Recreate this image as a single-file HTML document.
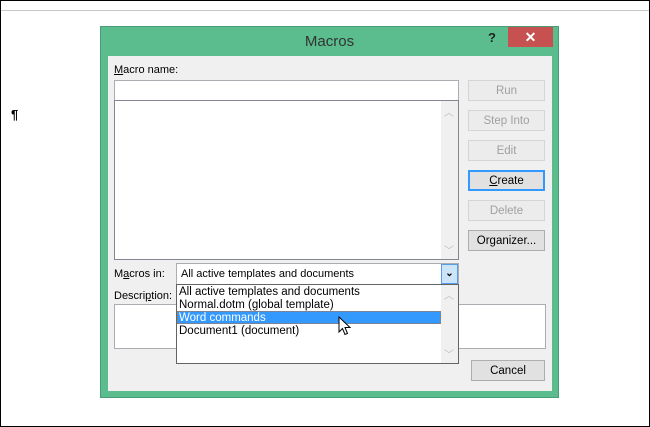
<!DOCTYPE html><html><head><style>
*{margin:0;padding:0;box-sizing:border-box}
body{width:650px;height:427px;background:#fff;position:relative;overflow:hidden;font-family:"Liberation Sans",sans-serif;font-size:11px;color:#000}
.a{position:absolute}
.btn{position:absolute;left:468px;width:77px;height:21px;border:1px solid #adadad;background:#e1e1e1;text-align:center;line-height:21px;font-size:11.5px}
.dis{border-color:#d5d5d5;background:#ececec;color:#a0a0a0}
u{text-decoration:underline}
</style></head><body>
<div class="a" style="left:0;top:0;width:650px;height:427px;border:1px solid #000"></div>
<div class="a" style="left:1px;top:10px;width:648px;height:1px;background:#c8c8c8"></div>
<div class="a" style="left:11px;top:107px;font-size:13px;font-weight:bold">¶</div>
<div class="a" style="left:100px;top:26px;width:459px;height:372px;background:#5bbd8e;border:1px solid #4a9c74"></div>
<div class="a" style="left:100px;top:33px;width:459px;text-align:center;font-size:15px;color:#333">Macros</div>
<div class="a" style="left:488px;top:30px;font-size:13px;font-weight:bold;color:#222">?</div>
<div class="a" style="left:508px;top:27px;width:45px;height:20px;background:#c75050;color:#fff;text-align:center;font-size:14px;line-height:20px;font-weight:bold">✕</div>
<div class="a" style="left:108px;top:56px;width:444px;height:335px;background:#f0f0f0"></div>
<div class="a" style="left:114px;top:64px"><u>M</u>acro name:</div>
<div class="a" style="left:114px;top:80px;width:345px;height:21px;background:#fff;border:1px solid #abadb3"></div>
<div class="a" style="left:114px;top:100px;width:345px;height:160px;background:#fff;border:1px solid #828790"></div>
<div class="a" style="left:441px;top:101px;width:17px;height:158px;background:#f0f0f0"></div>
<div class="a" style="left:444px;top:104px;color:#bbb;font-size:10px">︿</div>
<div class="a" style="left:444px;top:242px;color:#bbb;font-size:10px">﹀</div>
<div class="btn dis" style="top:80px">Run</div>
<div class="btn dis" style="top:110px">Step Into</div>
<div class="btn dis" style="top:140px">Edit</div>
<div class="btn" style="top:170px;border-color:#3399ff;box-shadow:inset 0 0 0 1px #3399ff"><u>C</u>reate</div>
<div class="btn dis" style="top:200px">Delete</div>
<div class="btn" style="top:230px">Or<u>g</u>anizer...</div>
<div class="btn" style="top:360px;left:471px;width:74px">Cancel</div>
<div class="a" style="left:114px;top:268px">M<u>a</u>cros in:</div>
<div class="a" style="left:176px;top:263px;width:283px;height:22px;background:#fff;border:1px solid #abadb3;padding:4px 4px">All active templates and documents</div>
<div class="a" style="left:441px;top:264px;width:17px;height:20px;background:#cce4f7;border:1px solid #569de5;text-align:center;font-size:10px;line-height:18px;font-weight:bold">⌄</div>
<div class="a" style="left:114px;top:290px">Descri<u>p</u>tion:</div>
<div class="a" style="left:114px;top:304px;width:432px;height:45px;background:#fff;border:1px solid #abadb3"></div>
<div class="a" style="left:176px;top:284px;width:283px;height:80px;background:#fff;border:1px solid #646464"></div>
<div class="a" style="left:441px;top:285px;width:17px;height:78px;background:#f0f0f0"></div>
<div class="a" style="left:444px;top:287px;color:#bbb;font-size:10px">︿</div>
<div class="a" style="left:444px;top:346px;color:#bbb;font-size:10px">﹀</div>
<div class="a" style="left:177px;top:311px;width:264px;height:13px;background:#3399ff;border:1px dotted #c07030"></div>
<div class="a" style="left:179px;top:286px;line-height:13px;font-size:11.5px">All active templates and documents<br>Normal.dotm (global template)<br><span style="color:#fff">Word commands</span><br>Document1 (document)</div>
<svg class="a" style="left:338px;top:316px" width="14" height="20" viewBox="0 0 14 20"><path d="M1 1V16L4.5 12.5L7 18.5L9.5 17.5L7 11.5H12Z" fill="#fff" stroke="#000" stroke-width="1"/></svg>
</body></html>
